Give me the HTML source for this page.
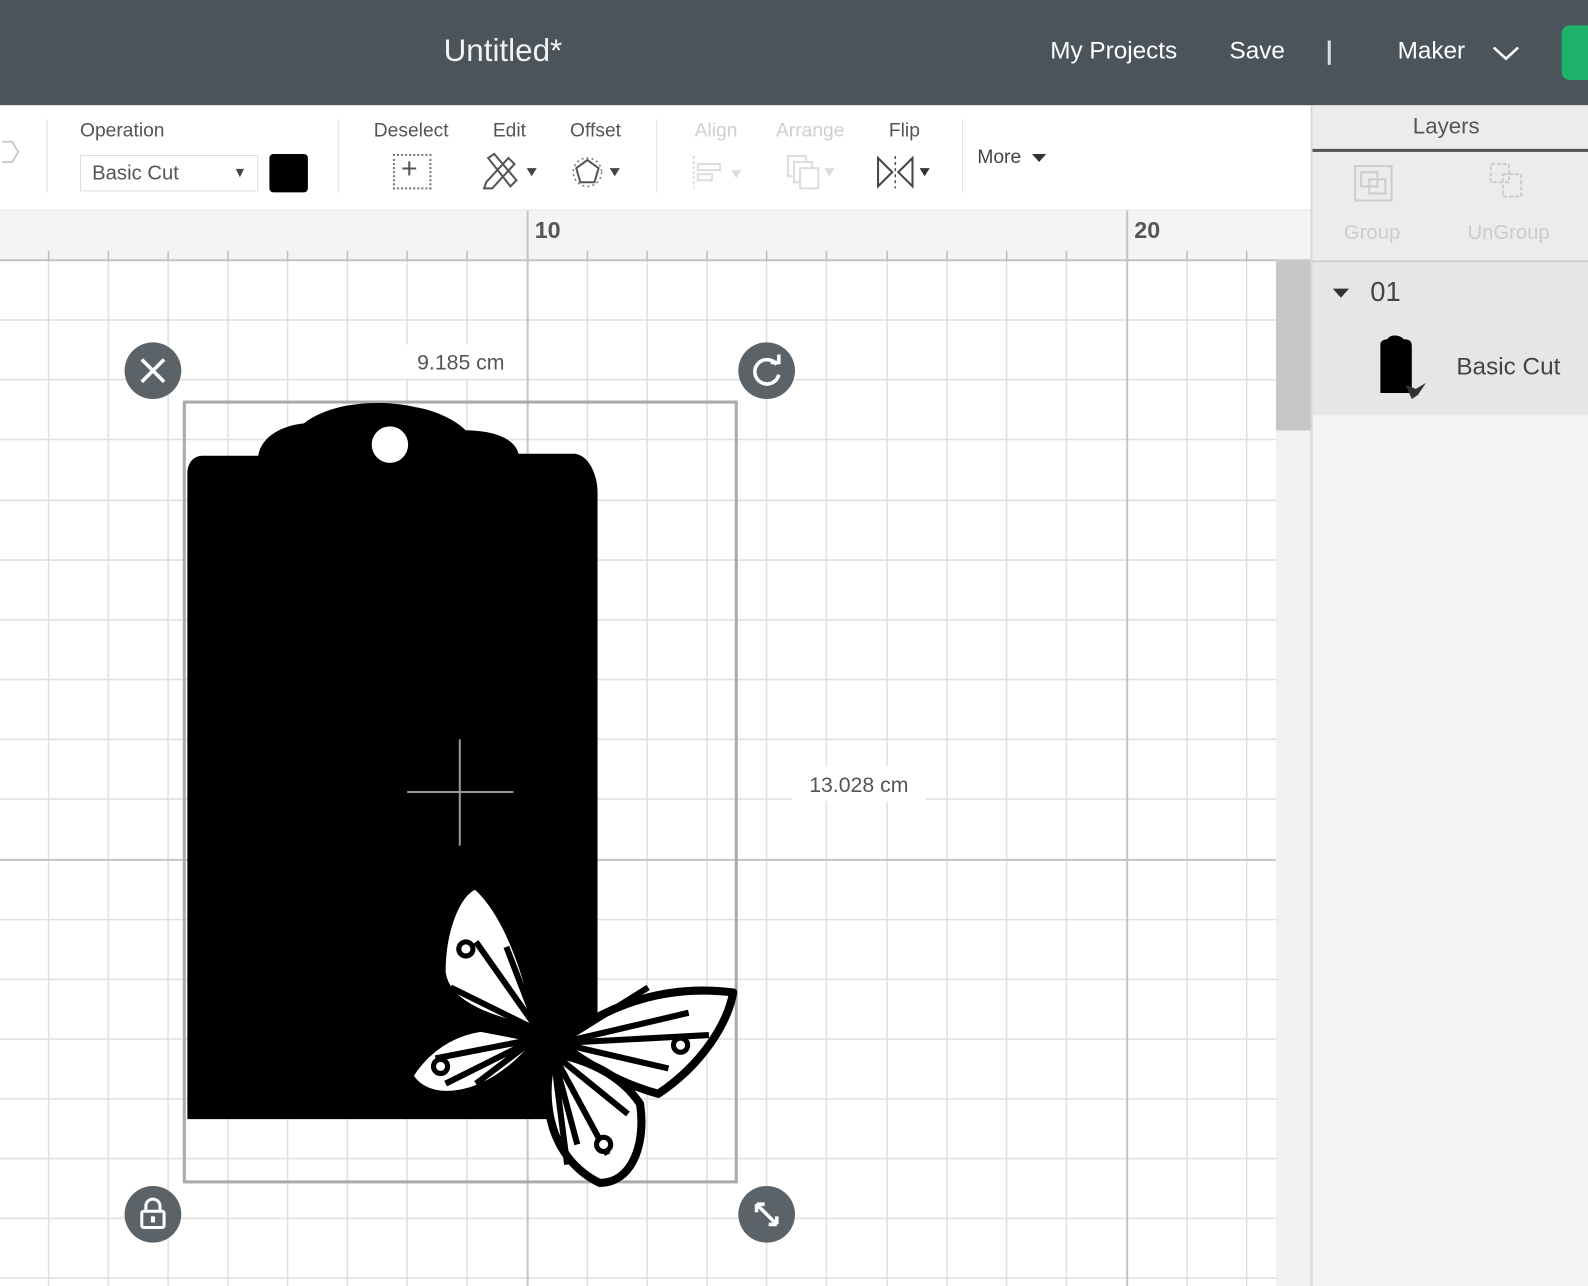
<!DOCTYPE html>
<html><head><meta charset="utf-8"><style>
*{margin:0;padding:0;box-sizing:border-box}
body{width:1588px;height:1270px;overflow:hidden;position:relative;background:#fff;font-family:"Liberation Sans",sans-serif}
#w{position:absolute;left:0;top:0;width:1568px;height:1254px;transform:scale(1.01276);transform-origin:0 0}
.a{position:absolute}
.lbl{position:absolute;font-size:19px;color:#555;white-space:nowrap;transform:translateX(-50%)}
.faded{color:#cfcfcf}
.sep{position:absolute;width:1px;background:#ddd;top:118px;height:72px}
.h{position:absolute;width:56px;height:56px;border-radius:50%;background:#5b6268}
</style></head><body><div id="w">
<!-- top bar -->
<div class="a" style="left:0;top:0;width:1600px;height:104px;background:#4b545b"></div>
<div class="a" style="left:438px;top:32px;font-size:31px;color:#f2f2f2">Untitled*</div>
<div class="a" style="left:1037px;top:37px;font-size:24px;color:#fff">My Projects</div>
<div class="a" style="left:1214px;top:37px;font-size:24px;color:#fff">Save</div>
<div class="a" style="left:1311px;top:40px;width:3px;height:24px;background:#ddd"></div>
<div class="a" style="left:1380px;top:37px;font-size:24px;color:#fff">Maker</div>
<svg class="a" style="left:1472px;top:42px" width="30" height="20"><path d="M3 5 L15 16 L27 5" stroke="#fff" stroke-width="2.5" fill="none"/></svg>
<div class="a" style="left:1542px;top:25px;width:60px;height:54px;border-radius:8px;background:#1db36a"></div>

<!-- toolbar -->
<div class="a" style="left:0;top:104px;width:1296px;height:104px;background:#fff;border-bottom:1px solid #e2e2e2"></div>
<svg class="a" style="left:0;top:138px" width="20" height="24"><path d="M2 2 L12 2 L18 12 L12 22 L2 22" stroke="#ccc" stroke-width="2" fill="none"/></svg>
<div class="sep" style="left:46px"></div><div class="sep" style="left:334px"></div><div class="sep" style="left:648px"></div><div class="sep" style="left:950px"></div>
<div class="a" style="left:79px;top:119px;font-size:19px;color:#555">Operation</div>
<div class="a" style="left:79px;top:153px;width:176px;height:36px;border:1px solid #ddd;background:#fff"></div>
<div class="a" style="left:91px;top:160px;font-size:20px;color:#555">Basic Cut</div>
<div class="a" style="left:230px;top:162px;font-size:14px;color:#444">▼</div>
<div class="a" style="left:266px;top:152px;width:38px;height:38px;border-radius:4px;background:#000"></div>
<div class="lbl" style="left:406px;top:119px">Deselect</div>
<div class="a" style="left:388px;top:152px;width:38px;height:35px;border:2px dotted #777"></div>
<div class="a" style="left:396px;top:151px;font-size:28px;color:#555;font-weight:300">+</div>
<div class="lbl" style="left:503px;top:119px">Edit</div>
<svg class="a" style="left:476px;top:150px" width="60" height="38"><path d="M4 30 L26 6 L32 12 L10 36 L2 36 Z M6 6 L12 2 L34 28 L28 34 Z" stroke="#555" stroke-width="2" fill="none"/><path d="M44 16 L54 16 L49 24Z" fill="#444"/></svg>
<div class="lbl" style="left:588px;top:119px">Offset</div>
<svg class="a" style="left:562px;top:150px" width="56" height="38"><path d="M18 8 L29 16 L25 30 L11 30 L7 16 Z" stroke="#555" stroke-width="2" fill="none"/><circle cx="18" cy="20" r="14" stroke="#777" stroke-width="1.5" stroke-dasharray="2 3" fill="none"/><path d="M40 16 L50 16 L45 24Z" fill="#444"/></svg>
<div class="lbl faded" style="left:707px;top:119px">Align</div>
<svg class="a" style="left:682px;top:152px" width="56" height="36"><path d="M3 2 V34" stroke="#ddd" stroke-width="2" stroke-dasharray="3 2"/><rect x="7" y="10" width="22" height="6" stroke="#ddd" fill="none" stroke-width="2"/><rect x="7" y="20" width="14" height="6" stroke="#ddd" fill="none" stroke-width="2"/><path d="M40 16 L50 16 L45 24Z" fill="#ddd"/></svg>
<div class="lbl faded" style="left:800px;top:119px">Arrange</div>
<svg class="a" style="left:774px;top:150px" width="56" height="40"><rect x="4" y="4" width="18" height="20" stroke="#ddd" fill="none" stroke-width="2"/><rect x="10" y="10" width="18" height="20" stroke="#ddd" fill="#fff" stroke-width="2"/><rect x="16" y="16" width="18" height="20" stroke="#ddd" fill="#fff" stroke-width="2"/><path d="M40 16 L50 16 L45 24Z" fill="#ddd"/></svg>
<div class="lbl" style="left:893px;top:119px">Flip</div>
<svg class="a" style="left:864px;top:152px" width="60" height="36"><path d="M3 4 L17 18 L3 32Z M37 4 L23 18 L37 32Z" stroke="#444" stroke-width="2" fill="none"/><path d="M20 2 V34" stroke="#555" stroke-width="1.5" stroke-dasharray="3 3"/><path d="M44 14 L54 14 L49 22Z" fill="#333"/></svg>
<div class="a" style="left:965px;top:145px;font-size:19px;color:#444">More</div>
<svg class="a" style="left:1019px;top:151px" width="14" height="10"><path d="M0 1 L14 1 L7 9Z" fill="#333"/></svg>

<!-- ruler + grid -->
<svg class="a" style="left:0;top:208px" width="1296" height="1062">
<rect x="0" y="0" width="1296" height="49" fill="#f4f4f4"/>
<g stroke="#e0e0e0" stroke-width="1.5">
<line x1="48" y1="49" x2="48" y2="1062"/><line x1="107" y1="49" x2="107" y2="1062"/><line x1="166" y1="49" x2="166" y2="1062"/><line x1="225" y1="49" x2="225" y2="1062"/><line x1="284" y1="49" x2="284" y2="1062"/><line x1="343" y1="49" x2="343" y2="1062"/><line x1="402" y1="49" x2="402" y2="1062"/><line x1="461" y1="49" x2="461" y2="1062"/><line x1="580" y1="49" x2="580" y2="1062"/><line x1="639" y1="49" x2="639" y2="1062"/><line x1="698" y1="49" x2="698" y2="1062"/><line x1="757" y1="49" x2="757" y2="1062"/><line x1="816" y1="49" x2="816" y2="1062"/><line x1="876" y1="49" x2="876" y2="1062"/><line x1="935" y1="49" x2="935" y2="1062"/><line x1="994" y1="49" x2="994" y2="1062"/><line x1="1053" y1="49" x2="1053" y2="1062"/><line x1="1172" y1="49" x2="1172" y2="1062"/><line x1="1231" y1="49" x2="1231" y2="1062"/>
<line x1="0" y1="108" x2="1296" y2="108"/><line x1="0" y1="167" x2="1296" y2="167"/><line x1="0" y1="226" x2="1296" y2="226"/><line x1="0" y1="286" x2="1296" y2="286"/><line x1="0" y1="345" x2="1296" y2="345"/><line x1="0" y1="404" x2="1296" y2="404"/><line x1="0" y1="463" x2="1296" y2="463"/><line x1="0" y1="522" x2="1296" y2="522"/><line x1="0" y1="581" x2="1296" y2="581"/><line x1="0" y1="700" x2="1296" y2="700"/><line x1="0" y1="759" x2="1296" y2="759"/><line x1="0" y1="818" x2="1296" y2="818"/><line x1="0" y1="877" x2="1296" y2="877"/><line x1="0" y1="936" x2="1296" y2="936"/><line x1="0" y1="995" x2="1296" y2="995"/><line x1="0" y1="1054" x2="1296" y2="1054"/>
</g>
<g stroke="#c4c4c4" stroke-width="2"><line x1="521" y1="0" x2="521" y2="1062"/><line x1="1113" y1="0" x2="1113" y2="1062"/><line x1="0" y1="641" x2="1296" y2="641"/><line x1="0" y1="49" x2="1296" y2="49"/></g>
<g stroke="#bbb" stroke-width="1.5"><line x1="48" y1="40" x2="48" y2="49"/><line x1="107" y1="40" x2="107" y2="49"/><line x1="166" y1="40" x2="166" y2="49"/><line x1="225" y1="40" x2="225" y2="49"/><line x1="284" y1="40" x2="284" y2="49"/><line x1="343" y1="40" x2="343" y2="49"/><line x1="402" y1="40" x2="402" y2="49"/><line x1="461" y1="40" x2="461" y2="49"/><line x1="580" y1="40" x2="580" y2="49"/><line x1="639" y1="40" x2="639" y2="49"/><line x1="698" y1="40" x2="698" y2="49"/><line x1="757" y1="40" x2="757" y2="49"/><line x1="816" y1="40" x2="816" y2="49"/><line x1="876" y1="40" x2="876" y2="49"/><line x1="935" y1="40" x2="935" y2="49"/><line x1="994" y1="40" x2="994" y2="49"/><line x1="1053" y1="40" x2="1053" y2="49"/><line x1="1172" y1="40" x2="1172" y2="49"/><line x1="1231" y1="40" x2="1231" y2="49"/></g>
<text x="528" y="27" font-family="Liberation Sans" font-size="23" fill="#555" font-weight="bold">10</text>
<text x="1120" y="27" font-family="Liberation Sans" font-size="23" fill="#555" font-weight="bold">20</text>
<rect x="1260" y="49" width="34" height="1013" fill="#f1f1f1"/>
<rect x="1260" y="49" width="34" height="168" fill="#c6c6c6"/>
</svg>

<!-- design -->
<svg class="a" style="left:0;top:0" width="1260" height="1270">
<rect x="182" y="397" width="545" height="770" fill="none" stroke="#aaa" stroke-width="3"/>
<path d="M200 450 L255 450 C258 430 280 420 300 418 C330 395 380 395 410 402 C430 405 450 415 460 425 C485 425 508 432 512 448 L568 448 C582 450 590 470 590 485 L590 1105 L185 1105 L185 468 C185 456 192 450 200 450Z" fill="#000"/>
<circle cx="385" cy="439" r="18" fill="#fff"/>
<g stroke="#999" stroke-width="2"><line x1="454" y1="730" x2="454" y2="835"/><line x1="402" y1="782" x2="507" y2="782"/></g>
<g fill="#fff" stroke="#000" stroke-width="8" stroke-linejoin="round">
<path d="M532 1018 C522 960 500 900 470 874 C450 880 436 920 436 960 C440 995 490 1008 532 1018Z"/>
<path d="M528 1022 C480 1002 430 1020 404 1062 C420 1092 480 1090 528 1032Z"/>
<path d="M552 1030 C600 990 660 972 724 980 C718 1012 692 1052 650 1080 C612 1070 580 1050 552 1030Z"/>
<path d="M546 1040 C532 1090 545 1145 592 1168 C624 1168 638 1130 632 1090 C612 1060 578 1046 546 1040Z"/>
</g>
<g stroke="#000" stroke-width="6" fill="none">
<path d="M532 1018 L470 930 M532 1018 L445 975 M532 1018 L500 935 M532 1018 L460 1000"/>
<path d="M528 1026 L430 1045 M528 1026 L470 1015 M528 1026 L440 1070 M528 1026 L470 1070"/>
<path d="M552 1030 L680 1000 M552 1030 L660 1055 M552 1030 L700 1022 M552 1030 L640 975"/>
<path d="M546 1040 L600 1140 M546 1040 L570 1130 M546 1040 L620 1100 M546 1040 L560 1150"/>
</g>
<g fill="#fff" stroke="#000" stroke-width="5"><circle cx="460" cy="937" r="7"/><circle cx="435" cy="1053" r="7"/><circle cx="672" cy="1032" r="7"/><circle cx="596" cy="1130" r="7"/></g>
<rect x="396" y="340" width="118" height="34" fill="#fff"/>
<text x="455" y="365" text-anchor="middle" font-family="Liberation Sans" font-size="21" fill="#555">9.185 cm</text>
<rect x="782" y="757" width="132" height="34" fill="#fff"/>
<text x="848" y="782" text-anchor="middle" font-family="Liberation Sans" font-size="21" fill="#555">13.028 cm</text>
</svg>
<div class="h" style="left:123px;top:338px"></div>
<svg class="a" style="left:123px;top:338px" width="56" height="56"><path d="M17 17 L39 39 M39 17 L17 39" stroke="#fff" stroke-width="3.5"/></svg>
<div class="h" style="left:729px;top:338px"></div>
<svg class="a" style="left:729px;top:338px" width="56" height="56"><path d="M38 22 A12 12 0 1 0 40 32" stroke="#fff" stroke-width="3.5" fill="none"/><path d="M32 20 L40 20 L40 12" stroke="#fff" stroke-width="3.5" fill="none"/></svg>
<div class="h" style="left:123px;top:1171px"></div>
<svg class="a" style="left:123px;top:1171px" width="56" height="56"><rect x="17" y="25" width="22" height="16" rx="2" stroke="#fff" stroke-width="3" fill="none"/><path d="M21 25 V20 A7 7 0 0 1 35 20 V25" stroke="#fff" stroke-width="3" fill="none"/><rect x="26" y="30" width="4" height="6" fill="#fff"/></svg>
<div class="h" style="left:729px;top:1171px"></div>
<svg class="a" style="left:729px;top:1171px" width="56" height="56"><path d="M18 18 L38 38 M18 18 L18 26 M18 18 L26 18 M38 38 L38 30 M38 38 L30 38" stroke="#fff" stroke-width="3.5" fill="none"/></svg>

<!-- right panel -->
<div class="a" style="left:1294px;top:104px;width:294px;height:1166px;background:#f3f3f3;border-left:2px solid #d8d8d8"></div>
<div class="a" style="left:1296px;top:104px;width:292px;height:153px;background:#ececec"></div>
<div class="a" style="left:1296px;top:147px;width:272px;height:3px;background:#555"></div>
<div class="a" style="left:1395px;top:112px;font-size:22px;color:#555">Layers</div>
<svg class="a" style="left:1334px;top:160px" width="44" height="42"><rect x="4" y="4" width="36" height="34" stroke="#ccc" stroke-width="2" fill="none"/><rect x="10" y="10" width="16" height="14" stroke="#ccc" stroke-width="2" fill="none"/><rect x="18" y="17" width="16" height="14" stroke="#ccc" stroke-width="2" fill="none"/></svg>
<svg class="a" style="left:1468px;top:158px" width="44" height="42"><rect x="4" y="4" width="18" height="18" stroke="#ccc" stroke-width="2" fill="none" stroke-dasharray="4 2"/><rect x="16" y="14" width="18" height="22" stroke="#ccc" stroke-width="2" fill="none" stroke-dasharray="4 2"/></svg>
<div class="a" style="left:1327px;top:219px;font-size:20px;color:#ccc">Group</div>
<div class="a" style="left:1449px;top:219px;font-size:20px;color:#ccc">UnGroup</div>
<div class="a" style="left:1296px;top:257px;width:292px;height:153px;background:#e6e6e6;border-top:2px solid #d0d0d0"></div>
<svg class="a" style="left:1316px;top:284px" width="18" height="12"><path d="M0 1 L16 1 L8 10Z" fill="#333"/></svg>
<div class="a" style="left:1353px;top:273px;font-size:27px;color:#444">01</div>
<svg class="a" style="left:1360px;top:330px" width="50" height="66"><path d="M3 10 C3 6 8 5 10 5 C12 0 22 0 26 5 C32 5 34 7 34 12 L34 58 L3 58Z" fill="#000"/><path d="M28 50 L38 54 L48 48 L40 60 L34 64Z" fill="#333"/></svg>
<div class="a" style="left:1438px;top:349px;font-size:24px;color:#444">Basic Cut</div>
</div></body></html>
